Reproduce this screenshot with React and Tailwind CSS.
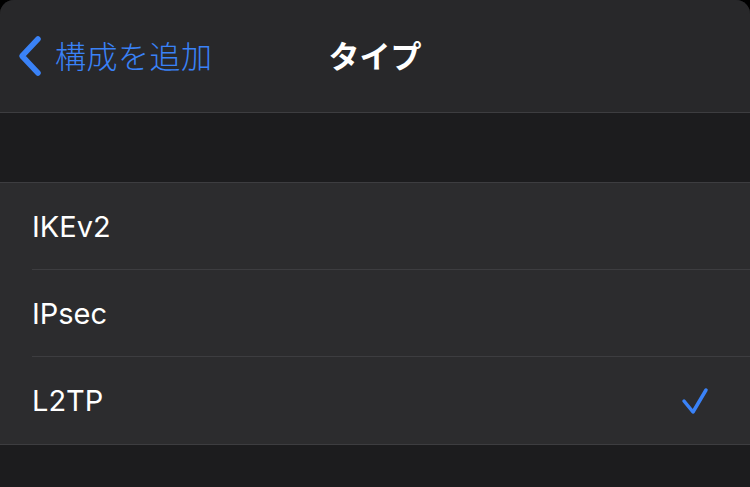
import React from 'react';

const ROWS = [
  { id: 'ikev2', label: 'IKEv2', checked: false },
  { id: 'ipsec', label: 'IPsec', checked: false },
  { id: 'l2tp', label: 'L2TP', checked: true },
];

const FONT = { fontFamily: 'Inter, "Noto Sans CJK JP", sans-serif' };

const App = () => {
  return (
    <div className="w-[750px] h-[487px] bg-black overflow-hidden" style={FONT}>
      <div className="h-full rounded-t-[14px] overflow-hidden bg-[#1c1c1e] flex flex-col">
        {/* Nav bar */}
        <div className="relative h-[113px] shrink-0 bg-[#28282a] border-b border-[#3d3d40] flex items-center">
          <div className="flex items-center pl-[16px] text-[#3a82f7]">
            <svg width="28" height="42" viewBox="0 0 28 42" fill="none">
              <path d="M22 4 L6 21 L22 38" stroke="currentColor" strokeWidth="5.5" strokeLinecap="round" strokeLinejoin="round" />
            </svg>
            <span className="ml-[11px] text-[31px] leading-none tracking-[0.5px] font-light">構成を追加</span>
          </div>
          <div className="absolute inset-0 flex items-center justify-center pointer-events-none">
            <span className="text-white text-[31px] font-bold leading-none">タイプ</span>
          </div>
        </div>

        {/* Section gap */}
        <div className="h-[69px] shrink-0" />

        {/* Options */}
        <div className="bg-[#2c2c2e] border-t border-b border-[#3d3d40]">
          {ROWS.map((r, i) => (
            <div key={r.id} className="pl-[32px]">
              <div className={`h-[87px] flex items-center pr-[40px] ${i < ROWS.length - 1 ? 'border-b border-[#3d3d40]' : ''}`}>
                <span className="flex-1 text-white text-[29px] leading-none">{r.label}</span>
                {r.checked && (
                  <svg width="28" height="28" viewBox="0 0 28 28" fill="none" className="mr-[1px]">
                    <path d="M3 14 L12 25 L25 3" stroke="#3a82f7" strokeWidth="3.5" strokeLinecap="round" strokeLinejoin="round" />
                  </svg>
                )}
              </div>
            </div>
          ))}
        </div>
      </div>
    </div>
  );
};

export default App;
